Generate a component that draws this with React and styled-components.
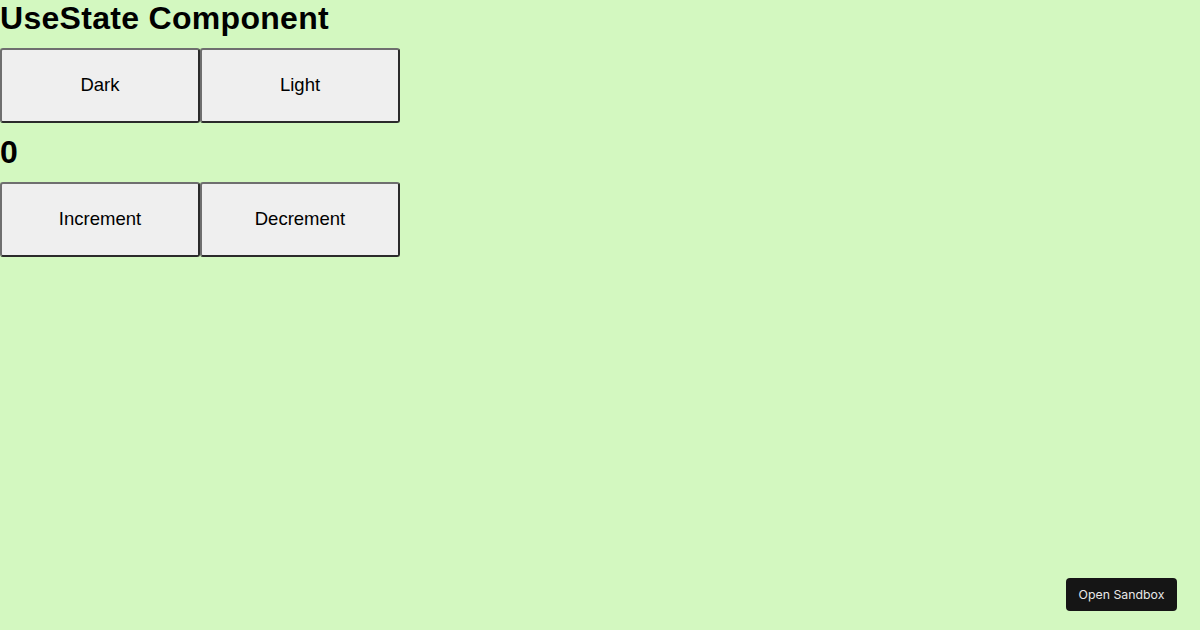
import React, { useState } from 'react';
import styled, { createGlobalStyle } from 'styled-components';

const GlobalStyle = createGlobalStyle`
  html, body {
    margin: 0;
    padding: 0;
    background: #d3f8c0;
    font-family: "Liberation Sans", Arial, sans-serif;
  }
`;

const Wrapper = styled.div`
  display: flex;
  flex-direction: column;
  align-items: flex-start;
  height: 630px;
`;

const Title = styled.h1`
  font-size: 32px;
  letter-spacing: 0.3px;
  font-weight: bold;
  margin: 0 0 11px;
  line-height: 37px;
  color: #000;
`;

const Row = styled.div`
  display: flex;
  margin-bottom: 11px;
`;

const Button = styled.button`
  width: 200px;
  height: 75px;
  padding: 0 0 1px;
  background: #efefef;
  border: 2px solid;
  border-color: #6f6f6f #2b2b2b #2b2b2b #6f6f6f;
  border-radius: 3px;
  font-family: "Liberation Sans", Arial, sans-serif;
  font-size: 18.5px;
  color: #000;
  cursor: pointer;
`;

const SandboxButton = styled.a`
  position: fixed;
  right: 23px;
  bottom: 19px;
  width: 111px;
  height: 33px;
  display: flex;
  align-items: center;
  justify-content: center;
  background: #151515;
  color: #e8e8e8;
  border-radius: 4px;
  font-family: Inter, "Noto Sans", sans-serif;
  font-size: 12.3px;
  text-decoration: none;
`;

const App = () => {
  const [count, setCount] = useState(0);
  const [theme, setTheme] = useState('light');

  return (
    <Wrapper data-theme={theme}>
      <GlobalStyle />
      <Title>UseState Component</Title>
      <Row>
        <Button onClick={() => setTheme('dark')}>Dark</Button>
        <Button onClick={() => setTheme('light')}>Light</Button>
      </Row>
      <Title>{count}</Title>
      <Row>
        <Button onClick={() => setCount(count + 1)}>Increment</Button>
        <Button onClick={() => setCount(count - 1)}>Decrement</Button>
      </Row>
      <SandboxButton href="#">Open Sandbox</SandboxButton>
    </Wrapper>
  );
};

export default App;
